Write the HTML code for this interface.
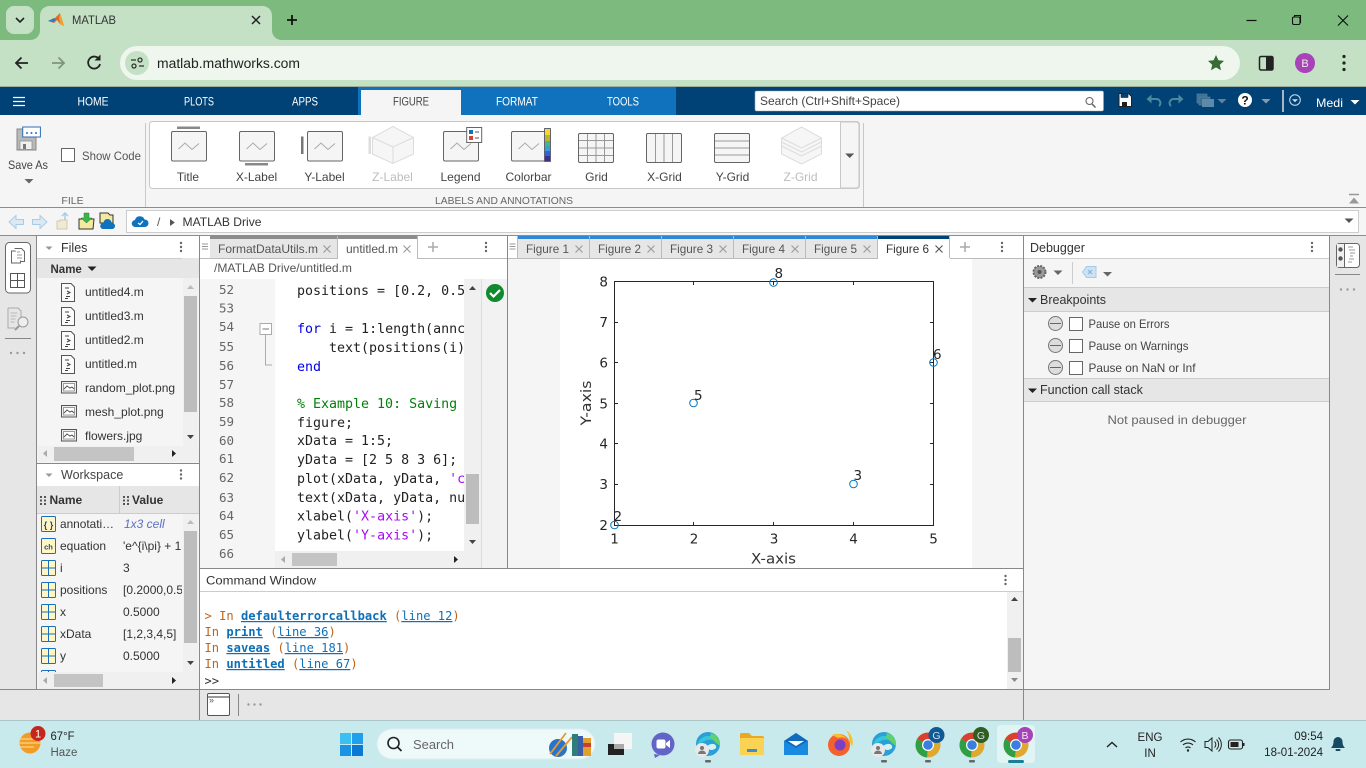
<!DOCTYPE html>
<html lang="en"><head><meta charset="utf-8"><title>MATLAB</title>
<style>
html,body{margin:0;padding:0;width:1366px;height:768px;overflow:hidden;background:#f5f5f5}
svg{display:block;position:absolute;left:0;top:0}
text{font-family:"Liberation Sans",Arial,sans-serif;font-size:12px;fill:#333;white-space:pre}
.m{text-anchor:middle}.e{text-anchor:end}
.w{fill:#fff;font-size:11.5px;text-anchor:middle}
.rl{text-anchor:middle;fill:#444}
.dis{fill:#bdbdbd}
.code{font-family:"DejaVu Sans Mono",monospace;font-size:13.3px;fill:#222}
.ln{font-family:"DejaVu Sans Mono",monospace;font-size:12.5px;fill:#666;text-anchor:end}
.kw{fill:#0000e6}.cm{fill:#028009}.st{fill:#a709f5}
.cw{font-family:"DejaVu Sans Mono",monospace;font-size:12.12px;fill:#c0651a}
.lk{fill:#0e70b8;text-decoration:underline}.b{font-weight:bold}
.pl{font-family:"DejaVu Sans",sans-serif;font-size:13.5px;fill:#262626}
.pa{font-family:"DejaVu Sans",sans-serif;font-size:14.5px;fill:#333}
.tab{fill:#555}
</style></head><body>
<svg width="1366" height="768" viewBox="0 0 1366 768" xmlns="http://www.w3.org/2000/svg">
<defs>
<g id="ax"><rect x=".5" y=".5" width="35" height="29.5" rx="1.5" fill="#f5f5f5" stroke="#666"/><path d="M7.5 18 14 12l7 6.5 7-6" fill="none" stroke="#aaa"/></g>
<g id="doc"><path d="M.5.5H10L13.5 4V18.5H.5Z" fill="#fafafa" stroke="#555"/><path d="M4 5h4M6 8l3 1.500-3 1.500M5 13.500h4M4 15.500h3" fill="none" stroke="#444"/></g>
<g id="img"><rect x=".5" y=".5" width="15" height="11.500" fill="#eee" stroke="#555"/><rect x="2.500" y="2.500" width="11" height="7.500" fill="#fff" stroke="#777" stroke-width=".7"/><path d="M3 8l3-3 3 2 2-1 2 2" fill="none" stroke="#555"/></g>
<g id="var"><rect x=".5" y=".5" width="14" height="15" rx="1" fill="#fff6c4" stroke="#1a6fbf"/><path d="M7.500 1V15M1 8H14" stroke="#1a6fbf" fill="none"/></g>
<g id="dots"><circle cx="0" cy="0" r="1.200" fill="#666"/><circle cx="0" cy="4" r="1.200" fill="#666"/><circle cx="0" cy="8" r="1.200" fill="#666"/></g>
<path id="dn" d="M-4.500-2H4.500L0 2.500Z"/>
<g id="x"><path d="M-3.500-3.500 3.500 3.500M3.500-3.500-3.500 3.500" stroke="#999" fill="none" stroke-width="1.100"/></g>
<g id="chr"><circle r="12.500" fill="#e0a92e"/><path d="M0 0-10.800-6.200A12.500 12.500 0 0 1 10.800-6.200Z" fill="#d9402f"/><path d="M0 0-10.800-6.200A12.500 12.500 0 0 0-1 12.500Z" fill="#2f9e44"/><circle r="6" fill="#fff"/><circle r="4.800" fill="#3a7fe0"/></g>
<g id="edge"><circle r="12" fill="#2a9fd8"/><path d="M-11 1A12 12 0 0 1 12 0C10-3 3-6-3-3-8-1-10 0-11 1Z" fill="#36c5d9"/><path d="M3-11A12 12 0 0 1 12 2C9 0 5-4 2-7Z" fill="#5fd36a"/><path d="M-1 2C4-2 9 0 8 4 5 7 0 7-1 2Z" fill="#d6f1f3"/><circle cx="-6" cy="6" r="7" fill="#e8e8e8"/><circle cx="-6" cy="4" r="2" fill="#777"/><path d="M-10 10a4 3.500 0 0 1 8 0Z" fill="#777"/></g>
<clipPath id="cc"><rect x="275" y="279" width="189" height="272"/></clipPath>
<clipPath id="wsv"><rect x="120" y="514" width="62" height="158"/></clipPath>
<clipPath id="fl"><rect x="38" y="278" width="144" height="168"/></clipPath>
<clipPath id="wsr"><rect x="38" y="514" width="146" height="158"/></clipPath>
</defs>

<!-- Browser chrome -->
<rect width="1366" height="40" fill="#7cbb7d"/>
<rect y="40" width="1366" height="46" fill="#c5e1c5"/>
<rect x="6" y="6" width="28" height="28" rx="8" fill="#c5e1c5"/>
<path d="M16 18l4 4 4-4" fill="none" stroke="#222" stroke-width="1.600"/>
<path d="M30 40C36 40 40 36 40 30V16C40 10 44 6 50 6H262C268 6 272 10 272 16V30C272 36 276 40 282 40Z" fill="#c5e1c5"/>
<path d="M48 21l7-3 5-5 4 13-4-2-3-4-3 3Z" fill="#e0662a"/><path d="M48 21l5 1 3-2-2-2Z" fill="#2a7fc1"/><path d="M60 13l4 13-4-2-1-6Z" fill="#f2a12e"/>
<text x="72" y="24" textLength="44" lengthAdjust="spacingAndGlyphs">MATLAB</text>
<path d="M252 16l8 8M260 16l-8 8" stroke="#222" stroke-width="1.500" fill="none"/>
<path d="M292 15v10M287 20h10" stroke="#111" stroke-width="1.800" fill="none"/>
<path d="M1246.500 20.500h10" stroke="#111" stroke-width="1.200"/>
<rect x="1292.500" y="17" width="7.500" height="7.500" rx="1.500" fill="none" stroke="#111" stroke-width="1.100"/><path d="M1294.500 17v-1.500h6v7h-1" fill="none" stroke="#111" stroke-width="1.100"/>
<path d="M1338 15.500l10 10M1348 15.500l-10 10" stroke="#111" stroke-width="1.200" fill="none"/>
<path d="M28 63H17M21.500 57.500 16 63l5.500 5.500" fill="none" stroke="#222" stroke-width="1.800"/>
<path d="M52 63H63M58.500 57.500 64 63l-5.500 5.500" fill="none" stroke="#7f947f" stroke-width="1.800"/>
<path d="M99 59a6 6 0 1 0 1 5" fill="none" stroke="#222" stroke-width="1.800"/><path d="M100.500 54.500v6h-6Z" fill="#222"/>
<rect x="120" y="46" width="1120" height="34" rx="17" fill="#eef6ee"/>
<circle cx="137" cy="63" r="12" fill="#c5e1c5"/>
<path d="M131 60h5M139 66h5" stroke="#333" stroke-width="1.300" fill="none"/><circle cx="140" cy="60" r="2" fill="none" stroke="#333" stroke-width="1.300"/><circle cx="134" cy="66" r="2" fill="none" stroke="#333" stroke-width="1.300"/>
<text x="157" y="68" style="font-size:13.500px;fill:#222" textLength="143" lengthAdjust="spacingAndGlyphs">matlab.mathworks.com</text>
<path d="M1216 55l2.400 5.300 5.600.6-4.200 3.800 1.200 5.600-5-2.900-5 2.900 1.200-5.600-4.200-3.800 5.600-.6Z" fill="#376b37"/>
<rect x="1259.500" y="56.500" width="13.500" height="13.500" rx="1.500" fill="none" stroke="#222" stroke-width="1.500"/><rect x="1266" y="56.500" width="7" height="13.500" fill="#222"/>
<circle cx="1305" cy="63" r="10" fill="#a742b8"/><text class="m" x="1305" y="67" style="fill:#eee;font-size:11px">B</text>
<circle cx="1344" cy="56.500" r="1.600" fill="#222"/><circle cx="1344" cy="63" r="1.600" fill="#222"/><circle cx="1344" cy="69.500" r="1.600" fill="#222"/>
<rect y="86" width="1366" height="1" fill="#9db09d"/>

<!-- MATLAB top bar -->
<rect y="87" width="1366" height="28" fill="#004176"/>
<path d="M13 97.500h12M13 101.500h12M13 105.500h12" stroke="#fff" stroke-width="1.300"/>
<text class="w" x="93" y="105.500" textLength="31" lengthAdjust="spacingAndGlyphs">HOME</text>
<text class="w" x="199" y="105.500" textLength="30" lengthAdjust="spacingAndGlyphs">PLOTS</text>
<text class="w" x="305" y="105.500" textLength="26" lengthAdjust="spacingAndGlyphs">APPS</text>
<rect x="461" y="87" width="215" height="28" fill="#1072bd"/>
<rect x="358" y="87" width="3" height="28" fill="#1072bd"/><rect x="358" y="87" width="103" height="3" fill="#1072bd"/>
<rect x="361" y="90" width="100" height="25" fill="#f5f5f5"/>
<text class="m" x="411" y="105.500" style="font-size:11.500px;fill:#444" textLength="36" lengthAdjust="spacingAndGlyphs">FIGURE</text>
<text class="w" x="517" y="105.500" textLength="42" lengthAdjust="spacingAndGlyphs">FORMAT</text>
<text class="w" x="623" y="105.500" textLength="32" lengthAdjust="spacingAndGlyphs">TOOLS</text>
<rect x="755" y="91" width="348.500" height="20" rx="1.500" fill="#fff" stroke="#9aa" stroke-width=".6"/>
<text x="760" y="105" style="fill:#444" textLength="140" lengthAdjust="spacingAndGlyphs">Search (Ctrl+Shift+Space)</text>
<circle cx="1089.500" cy="101" r="3.500" fill="none" stroke="#666" stroke-width="1.100"/><path d="M1092 104l3.500 3.500" stroke="#666" stroke-width="1.500"/>
<path d="M1119 93.500h9.500l3 3v10h-12.500Z" fill="#fff" stroke="#222"/><rect x="1121" y="93.500" width="7" height="4" fill="#004176" stroke="#222" stroke-width=".6"/><rect x="1122" y="102" width="5" height="4.500" fill="#222"/>
<path d="M1150 99h6a4 4 0 0 1 3 7" fill="none" stroke="#4b8a9a" stroke-width="2"/><path d="M1151.500 94.500 1146.500 99l5 4.500Z" fill="#4b8a9a"/>
<path d="M1180 99h-6a4 4 0 0 0-3 7" fill="none" stroke="#4b8a9a" stroke-width="2"/><path d="M1178.500 94.500 1183.500 99l-5 4.500Z" fill="#4b8a9a"/>
<rect x="1197" y="94" width="10" height="9" fill="#3d6f93" stroke="#5d8aa8" stroke-width=".6"/><rect x="1199" y="97" width="11" height="8" fill="#3d6f93" stroke="#5d8aa8" stroke-width=".6"/><rect x="1202" y="99" width="12" height="8" fill="#5d8aa8"/>
<path d="M-4.500-2H4.500L0 2.500Z" transform="translate(1222 101)" fill="#6a7f90"/>
<circle cx="1245" cy="100" r="7" fill="#fff"/><text class="m b" x="1245" y="104.500" style="font-size:12px;fill:#111;font-weight:bold">?</text>
<path d="M-4.500-2H4.500L0 2.500Z" transform="translate(1266 101)" fill="#8a9aa8"/>
<rect x="1282" y="90" width="2" height="22" fill="#a9b6c2"/>
<circle cx="1295" cy="100" r="5.300" fill="none" stroke="#cfe0ee" stroke-width="1"/><path d="M-3-1.300H3L0 1.700Z" transform="translate(1295 100.500)" fill="#cfe0ee"/>
<text x="1316" y="107" style="fill:#fff" textLength="27" lengthAdjust="spacingAndGlyphs">Medi</text>
<use href="#dn" transform="translate(1355 102)" fill="#fff"/>

<!-- Ribbon -->
<rect y="115" width="1366" height="92" fill="#f5f5f5"/>
<rect y="207" width="1366" height="1" fill="#8c8c8c"/>
<path d="M17 129h15l4 4v17H17Z" fill="#b9b9b9" stroke="#888"/><rect x="20" y="141" width="12" height="8.500" fill="#f0f0f0" stroke="#888" stroke-width=".7"/><rect x="23" y="144" width="3" height="5" fill="#777"/>
<rect x="22.700" y="127" width="17.700" height="10" fill="#fff" stroke="#2c6fb5"/><circle cx="27" cy="133" r="1" fill="#2c6fb5"/><circle cx="31.500" cy="133" r="1" fill="#2c6fb5"/><circle cx="36" cy="133" r="1" fill="#2c6fb5"/>
<text class="m" x="28" y="169" style="fill:#444" textLength="40" lengthAdjust="spacingAndGlyphs">Save As</text>
<use href="#dn" transform="translate(29 181)" fill="#666"/>
<rect x="61.500" y="148.500" width="13" height="13" fill="#fff" stroke="#666"/>
<text x="82" y="160" style="fill:#555" textLength="59" lengthAdjust="spacingAndGlyphs">Show Code</text>
<text class="m" x="72.500" y="204" style="font-size:10.500px;fill:#666">FILE</text>
<path d="M145.500 123V207M863.500 123V207" stroke="#c8c8c8"/>
<rect x="149.500" y="121.500" width="710" height="67" rx="3" fill="#fff" stroke="#c8c8c8"/>
<path d="M840.500 122H856a3 3 0 0 1 3 3V185a3 3 0 0 1-3 3H840.500Z" fill="#f5f5f5" stroke="#c8c8c8"/>
<use href="#dn" transform="translate(849.700 155.500)" fill="#555"/>
<use href="#ax" x="171" y="131"/><rect x="177" y="126.500" width="23" height="2.500" fill="#888"/>
<use href="#ax" x="239" y="131"/><rect x="245" y="163" width="23" height="2.500" fill="#888"/>
<use href="#ax" x="307" y="131"/><rect x="301" y="136.500" width="2.500" height="17.500" fill="#777"/>
<g stroke="#dcdcdc" fill="#f6f6f6"><path d="M393 126.500 413.500 137.500V154L393 163.500 372.500 154V137.500Z"/><path d="M372.500 137.500 393 147 413.500 137.500M393 147V163.500" fill="none"/></g><rect x="368.500" y="136.500" width="2.500" height="17.500" fill="#ddd"/>
<use href="#ax" x="443" y="131"/><rect x="466.700" y="127.500" width="15" height="15" fill="#fff" stroke="#666"/><rect x="469" y="130" width="4" height="4" fill="#1072bd"/><rect x="469" y="136" width="4" height="4" fill="#d9402f"/><path d="M475 132h4M475 138h4" stroke="#555"/>
<use href="#ax" x="511" y="131"/>
<g><rect x="544.500" y="128.500" width="6" height="33" fill="#3b2fa0" stroke="#555" stroke-width=".8"/><rect x="545" y="129" width="5" height="6" fill="#f3d92c"/><rect x="545" y="135" width="5" height="6" fill="#b9b52e"/><rect x="545" y="141" width="5" height="5" fill="#46b58a"/><rect x="545" y="146" width="5" height="5" fill="#2fa5d6"/><rect x="545" y="151" width="5" height="5" fill="#3460e0"/></g>
<g fill="#f5f5f5" stroke="#666"><rect x="578.500" y="133.500" width="35" height="29" rx="1.500"/><rect x="646.500" y="133.500" width="35" height="29" rx="1.500"/><rect x="714.500" y="133.500" width="35" height="29" rx="1.500"/></g>
<path d="M587.500 134V162M596 134V162M604.500 134V162M579 140.500H613M579 148H613M579 155.500H613M655.500 134V162M664 134V162M672.500 134V162M715 141H749M715 148H749M715 155H749" stroke="#999" fill="none"/>
<g stroke="#dcdcdc" fill="#f6f6f6"><path d="M801.500 127 821.500 138V154L801.500 164 781.500 154V138Z"/><path d="M781.500 142 801.500 152 821.500 142M781.500 146 801.500 156 821.500 146M781.500 138 801.500 148 821.500 138" fill="none"/></g>
<text class="rl" x="188" y="181">Title</text><text class="rl" x="256.500" y="181">X-Label</text><text class="rl" x="324.500" y="181">Y-Label</text><text class="rl dis" x="392.500" y="181" style="fill:#bdbdbd">Z-Label</text><text class="rl" x="460.500" y="181">Legend</text><text class="rl" x="528.500" y="181">Colorbar</text><text class="rl" x="596.500" y="181">Grid</text><text class="rl" x="664.500" y="181">X-Grid</text><text class="rl" x="732.500" y="181">Y-Grid</text><text class="rl" x="800.500" y="181" style="fill:#bdbdbd">Z-Grid</text>
<text class="m" x="504" y="204" style="font-size:10.500px;fill:#666" textLength="138" lengthAdjust="spacingAndGlyphs">LABELS AND ANNOTATIONS</text>
<path d="M1349 194.500h10" stroke="#999" stroke-width="1.500"/><path d="M1349 203.500l5-6 5 6Z" fill="#999"/>

<!-- Address bar -->
<rect y="208" width="1366" height="27" fill="#f5f5f5"/>
<g fill="#dbe9f4" stroke="#a9cbe6"><path d="M9 222l7-6.500v4h7.500v5H16v4Z"/><path d="M47 222l-7-6.500v4h-7.500v5H40v4Z"/></g>
<path d="M57 229v-8h3v-1h7v9Z" fill="#f0ead2" stroke="#cfcab0"/><path d="M65 213v7M62 216l3-3 3 3" fill="none" stroke="#a9cbe6" stroke-width="1.500"/>
<path d="M79 229v-10h15l-1 10Z" fill="#f5e8a0" stroke="#333"/><path d="M84 213h5v5h3l-5.500 5-5.500-5h3Z" fill="#3cb44a" stroke="#2a7a33" stroke-width=".5"/>
<path d="M100 213h8l2 2h3v8h-13Z" fill="#f5e8a0" stroke="#333"/><path d="M103 229a3 3 0 0 1 .5-6 4 4 0 0 1 8 0 3 3 0 0 1 1 6Z" fill="#1072bd"/>
<rect x="126.500" y="210.500" width="1232" height="22" fill="#fff" stroke="#ccc"/>
<path d="M135.500 227a3.500 3.500 0 0 1-.5-7 5 5 0 0 1 9.500-.5 3.700 3.700 0 0 1 .5 7.500Z" fill="#1072bd"/><path d="M138 223l2 1.500 3-3.500" stroke="#fff" fill="none" stroke-width="1.200"/>
<text x="157" y="226" style="fill:#555">/</text><path d="M170.500 220l3.500 2.500-3.500 2.500Z" fill="#555" stroke="#555"/>
<text x="182.500" y="226" style="fill:#333" textLength="79" lengthAdjust="spacingAndGlyphs">MATLAB Drive</text>
<use href="#dn" transform="translate(1349 220.500)" fill="#555"/>

<!-- Main background -->
<rect y="235" width="1366" height="486" fill="#e6e6e6"/>
<rect y="235" width="1366" height="1" fill="#8c8c8c"/>

<!-- Left sidebar -->
<rect x="5.500" y="242.500" width="25" height="50.500" rx="4" fill="#fff" stroke="#666"/>
<rect x="11.500" y="251" width="9" height="12" fill="#fff" stroke="#666"/><path d="M14.500 248.500h7l3 3v10h-3.500" fill="#fff" stroke="#666"/><path d="M17 252h3M17 255h5M17 258h5" stroke="#777" fill="none" stroke-width=".8"/>
<rect x="10.500" y="273.500" width="14" height="14" fill="#fff" stroke="#555"/><path d="M17.500 274V287M11 280.500H24" stroke="#555"/>
<path d="M8 308h10l3 3v7M8 308V328H15" fill="none" stroke="#aaa"/><path d="M10.500 313h7M10.500 316h6M10.500 319h5M10.500 322h4" stroke="#bbb"/><circle cx="23" cy="322" r="5" fill="#eee" stroke="#999"/><path d="M19 326l-4 4" stroke="#999" stroke-width="2"/>
<path d="M5 338.500H31" stroke="#888"/>
<circle cx="11" cy="353" r="1.200" fill="#999"/><circle cx="17.500" cy="353" r="1.200" fill="#999"/><circle cx="24" cy="353" r="1.200" fill="#999"/>
<rect x="36" y="235" width="1" height="454" fill="#888"/>

<!-- Files panel -->
<rect x="37" y="236" width="162" height="22" fill="#fff"/>
<path d="M-3.500-1.500H3.500L0 2Z" transform="translate(49 248)" fill="#999"/>
<text x="61" y="252" style="font-size:12.500px;fill:#333">Files</text>
<use href="#dots" transform="translate(181 243)"/>
<rect x="37" y="258" width="145" height="1" fill="#ccc"/>
<rect x="37" y="259" width="145" height="19" fill="#e6e6e6"/>
<rect x="37" y="278" width="162" height="185" fill="#f5f5f5"/>
<text x="50.500" y="273" style="font-weight:bold;fill:#333;font-size:11.500px">Name</text>
<use href="#dn" transform="translate(92 268.500)" fill="#222"/>
<use href="#doc" x="61" y="283"/><use href="#doc" x="61" y="307"/><use href="#doc" x="61" y="331"/><use href="#doc" x="61" y="355"/>
<use href="#img" x="61" y="381"/><use href="#img" x="61" y="405"/><use href="#img" x="61" y="429"/>
<g clip-path="url(#fl)">
<text x="85" y="296">untitled4.m</text><text x="85" y="320">untitled3.m</text><text x="85" y="344">untitled2.m</text><text x="85" y="368">untitled.m</text><text x="85" y="392">random_plot.png</text><text x="85" y="416">mesh_plot.png</text><text x="85" y="440">flowers.jpg</text>
</g>
<rect x="183" y="278" width="15" height="168" fill="#f0f0f0"/>
<path d="M190.500 285l-3.500 4h7Z" fill="#bbb"/><rect x="184" y="296" width="13" height="116" fill="#bdbdbd"/><path d="M187 435h7l-3.500 4Z" fill="#444"/>
<rect x="38" y="446" width="161" height="16" fill="#f0f0f0"/><rect x="54" y="447" width="80" height="14" fill="#c4c4c4"/>
<path d="M47 450v7l-4-3.500Z" fill="#aaa"/><path d="M172 450v7l4-3.500Z" fill="#222"/>
<rect x="37" y="463" width="162" height="1" fill="#888"/>
<rect x="199" y="236" width="1" height="485" fill="#888"/>

<!-- Workspace -->
<rect x="37" y="464" width="162" height="22" fill="#fff"/>
<path d="M-3.500-1.500H3.500L0 2Z" transform="translate(49 475)" fill="#999"/>
<text x="61" y="479" style="font-size:12.500px;fill:#444">Workspace</text>
<use href="#dots" transform="translate(181 470.500)"/>
<rect x="37" y="486" width="145" height="27" fill="#e6e6e6"/><rect x="119" y="486" width="1" height="27" fill="#ccc"/>
<rect x="37" y="513" width="162" height="176" fill="#f5f5f5"/><rect x="37" y="513" width="162" height="1" fill="#ccc"/>
<g fill="#555"><rect x="40" y="496" width="2" height="2"/><rect x="44" y="496" width="2" height="2"/><rect x="40" y="499.500" width="2" height="2"/><rect x="44" y="499.500" width="2" height="2"/><rect x="40" y="503" width="2" height="2"/><rect x="44" y="503" width="2" height="2"/><rect x="123" y="496" width="2" height="2"/><rect x="127" y="496" width="2" height="2"/><rect x="123" y="499.500" width="2" height="2"/><rect x="127" y="499.500" width="2" height="2"/><rect x="123" y="503" width="2" height="2"/><rect x="127" y="503" width="2" height="2"/></g>
<text x="49.500" y="504" style="font-weight:bold">Name</text><text x="132" y="504" style="font-weight:bold">Value</text>
<g clip-path="url(#wsr)">
<rect x="41.500" y="516.500" width="14" height="15" rx="1" fill="#fff6c4" stroke="#1a6fbf"/><text class="m" x="48.500" y="528" style="font-size:9px;font-weight:bold;fill:#1a4f8a">{ }</text>
<rect x="41.500" y="538.500" width="14" height="15" rx="1" fill="#fff6c4" stroke="#1a6fbf"/><text class="m" x="48.500" y="549.500" style="font-size:7.500px;font-weight:bold;fill:#1a4f8a">ch</text>
<use href="#var" x="41" y="560"/><use href="#var" x="41" y="582"/><use href="#var" x="41" y="604"/><use href="#var" x="41" y="626"/><use href="#var" x="41" y="648"/><use href="#var" x="41" y="670"/>
</g>
<text x="60" y="528" textLength="54" lengthAdjust="spacingAndGlyphs">annotati…</text><text x="60" y="550">equation</text><text x="60" y="572">i</text><text x="60" y="594">positions</text><text x="60" y="616">x</text><text x="60" y="638">xData</text><text x="60" y="660">y</text>
<g clip-path="url(#wsv)">
<text x="124" y="528" style="font-style:italic;fill:#5a6fc8">1x3 cell</text><text x="123" y="550">'e^{i\pi} + 1</text><text x="123" y="572">3</text><text x="123" y="594">[0.2000,0.5</text><text x="123" y="616">0.5000</text><text x="123" y="638">[1,2,3,4,5]</text><text x="123" y="660">0.5000</text>
</g>
<rect x="183" y="514" width="15" height="158" fill="#f0f0f0"/>
<path d="M190.500 520l-3.500 4h7Z" fill="#bbb"/><rect x="184" y="531" width="13" height="112" fill="#bdbdbd"/><path d="M187 661h7l-3.500 4Z" fill="#444"/>
<rect x="38" y="672" width="161" height="17" fill="#f0f0f0"/><rect x="54" y="674" width="49" height="13" fill="#c4c4c4"/>
<path d="M47 677v7l-4-3.500Z" fill="#aaa"/><path d="M172 677v7l4-3.500Z" fill="#222"/>
<rect y="689" width="1330" height="1" fill="#888"/>

<!-- Editor -->
<rect x="200" y="236" width="307" height="23" fill="#fff"/>
<path d="M202 244h6M202 246.500h6M202 249h6" stroke="#999"/>
<rect x="210" y="236" width="127" height="22" fill="#e6e6e6"/><rect x="210" y="236" width="127" height="3" fill="#8c8c8c"/>
<rect x="337" y="236" width="1" height="22" fill="#bbb"/>
<rect x="338" y="236" width="79" height="3" fill="#8c8c8c"/><rect x="417" y="236" width="1" height="23" fill="#bbb"/>
<rect x="200" y="258" width="138" height="1" fill="#bbb"/><rect x="418" y="258" width="89" height="1" fill="#bbb"/>
<text x="218" y="253" class="tab" textLength="100" lengthAdjust="spacingAndGlyphs">FormatDataUtils.m</text><use href="#x" transform="translate(327 249)"/>
<text x="346" y="253" class="tab" textLength="52" lengthAdjust="spacingAndGlyphs">untitled.m</text><use href="#x" transform="translate(407 249)"/>
<path d="M433 242v10M428 247h10" stroke="#aaa" stroke-width="1.500"/>
<use href="#dots" transform="translate(486 243)"/>
<rect x="200" y="259" width="307" height="20" fill="#fff"/>
<text x="214" y="272" style="fill:#555" textLength="138" lengthAdjust="spacingAndGlyphs">/MATLAB Drive/untitled.m</text>
<rect x="200" y="279" width="75" height="289" fill="#f5f5f5"/>
<rect x="275" y="279" width="189" height="272" fill="#fff"/>
<rect x="275" y="551" width="206" height="17" fill="#f0f0f0"/>
<rect x="464" y="279" width="17" height="272" fill="#f0f0f0"/>
<rect x="481" y="279" width="26" height="289" fill="#f2f2f2"/>
<rect x="481" y="279" width="1" height="289" fill="#ddd"/>
<text class="ln" x="234" y="294">52</text><text class="ln" x="234" y="312.500">53</text><text class="ln" x="234" y="331">54</text><text class="ln" x="234" y="351">55</text><text class="ln" x="234" y="370">56</text><text class="ln" x="234" y="389">57</text><text class="ln" x="234" y="407">58</text><text class="ln" x="234" y="426">59</text><text class="ln" x="234" y="445">60</text><text class="ln" x="234" y="463">61</text><text class="ln" x="234" y="482">62</text><text class="ln" x="234" y="502">63</text><text class="ln" x="234" y="520">64</text><text class="ln" x="234" y="539">65</text><text class="ln" x="234" y="558">66</text>
<rect x="260" y="323.500" width="11.500" height="11" fill="#fff" stroke="#aaa"/><path d="M262.500 329h6.500" stroke="#777"/><path d="M265.500 335V365H272" fill="none" stroke="#aaa"/>
<g clip-path="url(#cc)">
<text class="code" x="297" y="295">positions = [0.2, 0.5, 0.8];</text>
<text class="code" x="297" y="333"><tspan class="kw">for</tspan> i = 1:length(annc</text>
<text class="code" x="329" y="352">text(positions(i), y);</text>
<text class="code kw" x="297" y="371" style="fill:#0000e6">end</text>
<text class="code cm" x="297" y="408" style="fill:#028009">% Example 10: Saving a figure</text>
<text class="code" x="297" y="427">figure;</text>
<text class="code" x="297" y="445">xData = 1:5;</text>
<text class="code" x="297" y="464">yData = [2 5 8 3 6];</text>
<text class="code" x="297" y="483">plot(xData, yData, <tspan class="st">'c');</tspan></text>
<text class="code" x="297" y="502">text(xData, yData, num2str(y));</text>
<text class="code" x="297" y="520.500">xlabel(<tspan class="st">'X-axis'</tspan>);</text>
<text class="code" x="297" y="539.500">ylabel(<tspan class="st">'Y-axis'</tspan>);</text>
</g>
<path d="M472.500 286l-3.500 4h7Z" fill="#444"/><rect x="466" y="474" width="13" height="50" fill="#bdbdbd"/><path d="M469 540h7l-3.500 4Z" fill="#444"/>
<rect x="292" y="553" width="45" height="13" fill="#c4c4c4"/><path d="M285 556v7l-4-3.500Z" fill="#aaa"/><path d="M454 556v7l4-3.500Z" fill="#222"/>
<circle cx="495" cy="293" r="9" fill="#0f8a2c"/><path d="M490 293l3.500 3.500 6.500-6.500" fill="none" stroke="#fff" stroke-width="2.200"/>
<rect x="507" y="236" width="1" height="333" fill="#888"/><rect x="508" y="402" width="1" height="2" fill="#222"/>

<!-- Figures -->
<rect x="508" y="236" width="515" height="23" fill="#fff"/>
<path d="M509.500 244h6M509.500 246.500h6M509.500 249h6" stroke="#999"/>
<g fill="#e6e6e6"><rect x="518" y="236" width="71" height="22"/><rect x="590" y="236" width="71" height="22"/><rect x="662" y="236" width="71" height="22"/><rect x="734" y="236" width="71" height="22"/><rect x="806" y="236" width="71" height="22"/></g>
<g fill="#2f87d6"><rect x="518" y="236" width="71" height="3"/><rect x="590" y="236" width="71" height="3"/><rect x="662" y="236" width="71" height="3"/><rect x="734" y="236" width="71" height="3"/><rect x="806" y="236" width="71" height="3"/></g>
<rect x="878" y="236" width="72" height="3" fill="#004176"/>
<path d="M517.500 236V258M589.500 236V258M661.500 236V258M733.500 236V258M805.500 236V258M877.500 236V258M949.500 236V258" stroke="#bbb"/>
<rect x="508" y="258" width="370" height="1" fill="#bbb"/><rect x="950" y="258" width="73" height="1" fill="#bbb"/>
<text x="526" y="253" class="tab" textLength="43" lengthAdjust="spacingAndGlyphs">Figure 1</text><use href="#x" transform="translate(579 249)"/>
<text x="598" y="253" class="tab" textLength="43" lengthAdjust="spacingAndGlyphs">Figure 2</text><use href="#x" transform="translate(651 249)"/>
<text x="670" y="253" class="tab" textLength="43" lengthAdjust="spacingAndGlyphs">Figure 3</text><use href="#x" transform="translate(723 249)"/>
<text x="742" y="253" class="tab" textLength="43" lengthAdjust="spacingAndGlyphs">Figure 4</text><use href="#x" transform="translate(795 249)"/>
<text x="814" y="253" class="tab" textLength="43" lengthAdjust="spacingAndGlyphs">Figure 5</text><use href="#x" transform="translate(867 249)"/>
<text x="886" y="253" style="fill:#333" textLength="43" lengthAdjust="spacingAndGlyphs">Figure 6</text><g transform="translate(939 249)"><path d="M-3.500-3.500 3.500 3.500M3.500-3.500-3.500 3.500" stroke="#555" fill="none" stroke-width="1.100"/></g>
<path d="M965 242v10M960 247h10" stroke="#aaa" stroke-width="1.500"/>
<use href="#dots" transform="translate(1002 243)"/>
<rect x="508" y="259" width="515" height="309" fill="#f5f5f5"/>
<rect x="560" y="259" width="412" height="309" fill="#fff"/>
<rect x="614.500" y="281.500" width="319" height="244" fill="none" stroke="#262626"/>
<path d="M693.500 525V522M773.500 525V522M853.500 525V522M693.500 282V285M773.500 282V285M853.500 282V285M615 322.500h3M615 362.500h3M615 403.500h3M615 443.500h3M615 484.500h3M933 322.500h-3M933 362.500h-3M933 403.500h-3M933 443.500h-3M933 484.500h-3" stroke="#262626" fill="none"/>
<g><text class="pl e" x="608" y="286.500">8</text><text class="pl e" x="608" y="327">7</text><text class="pl e" x="608" y="367.500">6</text><text class="pl e" x="608" y="408.500">5</text><text class="pl e" x="608" y="448.500">4</text><text class="pl e" x="608" y="489">3</text><text class="pl e" x="608" y="530">2</text>
<text class="pl m" x="614.500" y="543.500">1</text><text class="pl m" x="694" y="543.500">2</text><text class="pl m" x="774" y="543.500">3</text><text class="pl m" x="853.500" y="543.500">4</text><text class="pl m" x="933.500" y="543.500">5</text></g>
<text class="pa m" x="773.500" y="563.500" textLength="45" lengthAdjust="spacingAndGlyphs">X-axis</text>
<text class="pa m" transform="translate(591 403) rotate(-90)" x="0" y="0" textLength="45" lengthAdjust="spacingAndGlyphs">Y-axis</text>
<g fill="none" stroke="#0072bd"><circle cx="614.500" cy="525" r="3.800"/><circle cx="693.500" cy="403" r="3.800"/><circle cx="773.500" cy="282.500" r="3.800"/><circle cx="853.500" cy="484" r="3.800"/><circle cx="933.500" cy="362.500" r="3.800"/></g>
<text class="pl" x="613.500" y="521">2</text><text class="pl" x="694" y="400">5</text><text class="pl" x="774.500" y="278">8</text><text class="pl" x="853.500" y="480">3</text><text class="pl" x="933" y="359">6</text>
<rect x="1023" y="236" width="1" height="485" fill="#888"/>

<!-- Command Window -->
<rect x="200" y="568" width="823" height="1" fill="#888"/>
<rect x="200" y="569" width="823" height="22" fill="#fff"/>
<text x="206" y="584.500" style="fill:#333" textLength="110" lengthAdjust="spacingAndGlyphs">Command Window</text>
<use href="#dots" transform="translate(1005.500 576)"/>
<rect x="200" y="591" width="823" height="1" fill="#ccc"/>
<rect x="200" y="592" width="823" height="97" fill="#fff"/>
<text class="cw" x="204.500" y="620">&gt; In <tspan class="lk b">defaulterrorcallback</tspan> (<tspan class="lk">line 12</tspan>)</text>
<text class="cw" x="204.500" y="636">In <tspan class="lk b">print</tspan> (<tspan class="lk">line 36</tspan>)</text>
<text class="cw" x="204.500" y="652">In <tspan class="lk b">saveas</tspan> (<tspan class="lk">line 181</tspan>)</text>
<text class="cw" x="204.500" y="668">In <tspan class="lk b">untitled</tspan> (<tspan class="lk">line 67</tspan>)</text>
<text class="cw" x="204.500" y="685" style="fill:#333">&gt;&gt;</text>
<rect x="1007" y="592" width="16" height="97" fill="#f0f0f0"/>
<path d="M1014.500 597l-3.500 4h7Z" fill="#444"/><rect x="1008" y="638" width="13" height="34" fill="#bdbdbd"/><path d="M1011 678h7l-3.500 4Z" fill="#888"/>

<!-- Debugger -->
<rect x="1024" y="236" width="305" height="22" fill="#fff"/>
<text x="1030" y="252" style="font-size:12.500px;fill:#333">Debugger</text>
<use href="#dots" transform="translate(1312 243)"/>
<rect x="1024" y="258" width="305" height="1" fill="#ccc"/>
<rect x="1024" y="259" width="305" height="430" fill="#f5f5f5"/>
<circle cx="1039.500" cy="272" r="6" fill="#999" stroke="#666" stroke-width="2" stroke-dasharray="2 1.200"/><circle cx="1039.500" cy="272" r="2" fill="#555"/>
<use href="#dn" transform="translate(1058 272.500)" fill="#666"/>
<path d="M1072.500 262V284" stroke="#ccc"/>
<path d="M1082.500 272l4-5.500H1096V277.500H1086.500Z" fill="#cfe2f3" stroke="#a9cbe6"/><path d="M1088 270l4 4M1092 270l-4 4" stroke="#7fb0d8"/>
<use href="#dn" transform="translate(1107.500 274)" fill="#666"/>
<rect x="1024" y="288" width="305" height="23" fill="#e6e6e6"/><path d="M1024 287.500H1329M1024 311.500H1329" stroke="#ccc"/>
<use href="#dn" transform="translate(1032.500 300)" fill="#222"/>
<text x="1040" y="304" style="font-size:12.500px;fill:#333">Breakpoints</text>
<g fill="#ddd" stroke="#777"><circle cx="1055.500" cy="323.500" r="7"/><circle cx="1055.500" cy="345.500" r="7"/><circle cx="1055.500" cy="367.500" r="7"/></g>
<path d="M1050 323.500h11M1050 345.500h11M1050 367.500h11" stroke="#666"/>
<g fill="#fff" stroke="#666"><rect x="1069.500" y="317.500" width="13" height="13"/><rect x="1069.500" y="339.500" width="13" height="13"/><rect x="1069.500" y="361.500" width="13" height="13"/></g>
<text x="1088.500" y="328" style="fill:#444" textLength="81" lengthAdjust="spacingAndGlyphs">Pause on Errors</text><text x="1088.500" y="350" style="fill:#444" textLength="100" lengthAdjust="spacingAndGlyphs">Pause on Warnings</text><text x="1088.500" y="372" style="fill:#444" textLength="107" lengthAdjust="spacingAndGlyphs">Pause on NaN or Inf</text>
<rect x="1024" y="379" width="305" height="22" fill="#e6e6e6"/><path d="M1024 378.500H1329M1024 401.500H1329" stroke="#ccc"/>
<use href="#dn" transform="translate(1032.500 390.500)" fill="#222"/>
<text x="1040" y="394" style="font-size:12.500px;fill:#333">Function call stack</text>
<text class="m" x="1177" y="424" style="fill:#666" textLength="139" lengthAdjust="spacingAndGlyphs">Not paused in debugger</text>
<rect x="1329" y="236" width="1" height="453" fill="#888"/>

<!-- Right sidebar -->
<rect x="1336.500" y="243.500" width="23" height="24" rx="3" fill="#fff" stroke="#666"/><path d="M1344.500 244V267" stroke="#666"/>
<rect x="1337" y="244" width="7" height="23" fill="#f0f0f0"/><circle cx="1340.500" cy="249.500" r="2.200" fill="#555"/><circle cx="1340.500" cy="258.500" r="2.200" fill="#555"/>
<path d="M1348 247h5M1349 250h6M1350 253h5M1350 256h3M1349 259h5M1348 262h4" stroke="#777" fill="none" stroke-width=".8"/>
<path d="M1335 274.500H1360" stroke="#888"/>
<circle cx="1341" cy="289.500" r="1.200" fill="#999"/><circle cx="1347.500" cy="289.500" r="1.200" fill="#999"/><circle cx="1354" cy="289.500" r="1.200" fill="#999"/>

<!-- Bottom bar -->
<rect x="207.500" y="693.500" width="22" height="22" rx="1.500" fill="#fff" stroke="#555"/><path d="M208 697h21" stroke="#999" stroke-width="2"/>
<text x="209" y="703" style="font-size:9px;fill:#555">»</text>
<path d="M238.500 694V716" stroke="#888"/>
<circle cx="248.500" cy="704.500" r="1.200" fill="#999"/><circle cx="254.500" cy="704.500" r="1.200" fill="#999"/><circle cx="260.500" cy="704.500" r="1.200" fill="#999"/>

<!-- Taskbar -->
<rect y="720" width="1366" height="48" fill="#c9eaec"/>
<rect y="720" width="1366" height="1" fill="#a9c4c6"/>
<circle cx="30" cy="743" r="10.500" fill="#f39c25"/><path d="M19 739h18M19 743h22M20 747h14" stroke="#f8d48a" stroke-width="1.300"/>
<circle cx="38" cy="733.500" r="7.500" fill="#c4281c"/><text class="m" x="38" y="737.500" style="fill:#fff;font-size:11px">1</text>
<text x="50.500" y="740" style="fill:#222;font-size:11.500px" textLength="24" lengthAdjust="spacingAndGlyphs">67°F</text>
<text x="50.500" y="756" style="fill:#555;font-size:11.500px">Haze</text>
<g><rect x="340" y="733" width="11" height="11" fill="#3cc0f2"/><rect x="352" y="733" width="11" height="11" fill="#20a0ea"/><rect x="340" y="745" width="11" height="11" fill="#1b93e4"/><rect x="352" y="745" width="11" height="11" fill="#0b78d4"/></g>
<rect x="377" y="729" width="218" height="30" rx="15" fill="#eef9f9" stroke="#dbeeee"/>
<circle cx="393.500" cy="743" r="5.500" fill="none" stroke="#222" stroke-width="1.600"/><path d="M397.500 747l4 4" stroke="#222" stroke-width="1.800"/>
<text x="413" y="749" style="fill:#666;font-size:12.500px" textLength="41" lengthAdjust="spacingAndGlyphs">Search</text>
<circle cx="558" cy="748" r="9" fill="#2a74c8"/><path d="M550 754 566 733M556 756 572 737" stroke="#e89a30" stroke-width="1.800"/>
<rect x="572" y="734" width="6" height="22" fill="#2e7d7a"/><rect x="578" y="736" width="5" height="20" fill="#3a5fa8"/><rect x="583" y="738" width="8" height="18" fill="#e0a02e"/><rect x="583" y="743" width="8" height="4" fill="#c8402c"/>
<rect x="608" y="744" width="16" height="11" fill="#222"/><rect x="614" y="733" width="18" height="16" fill="#f5f5f5"/><rect x="614" y="744" width="10" height="5" fill="#aaa"/>
<circle cx="663" cy="744" r="11.500" fill="#6264c8"/><path d="M654 754l1 4 5-3Z" fill="#6264c8"/><rect x="656.500" y="739.500" width="9" height="9" rx="2" fill="#fff"/><path d="M666 743l4-3v8l-4-3Z" fill="#fff"/>
<use href="#edge" transform="translate(708 744)"/><rect x="705" y="760" width="6" height="2.500" rx="1" fill="#666"/>
<path d="M740 735a2 2 0 0 1 2-2h7l3 3h10a2 2 0 0 1 2 2v2h-24Z" fill="#e8a820"/><rect x="740" y="738" width="24" height="17" rx="1.500" fill="#fad355"/><rect x="747" y="749" width="10" height="3" fill="#3a8fd0"/>
<path d="M784 741l12-8 12 8v14h-24Z" fill="#1a8ae0"/><path d="M784 741l12-8 12 8-12 7Z" fill="#0f6cbd"/><path d="M788 741h16l-8 5Z" fill="#fff"/>
<circle cx="839" cy="745" r="11" fill="#f5612c"/><path d="M832 735c6-3 14 0 17 7 1-5-1-9-3-12 6 4 8 11 6 17-2-8-8-11-14-9Z" fill="#fbbf2e"/><circle cx="840" cy="745" r="5.500" fill="#7b3fc4"/>
<use href="#edge" transform="translate(884 744)"/><rect x="881" y="760" width="6" height="2.500" rx="1" fill="#666"/>
<use href="#chr" transform="translate(928 745)"/><circle cx="936.500" cy="735" r="8" fill="#0d5a96"/><text class="m" x="936.500" y="739" style="fill:#dde;font-size:10.500px">G</text><rect x="925" y="760" width="6" height="2.500" rx="1" fill="#666"/>
<use href="#chr" transform="translate(972 745)"/><circle cx="981" cy="735" r="8" fill="#2f5e1e"/><text class="m" x="981" y="739" style="fill:#dde;font-size:10.500px">G</text><rect x="969" y="760" width="6" height="2.500" rx="1" fill="#666"/>
<rect x="997" y="725" width="38" height="38" rx="4" fill="#e0f4f4"/>
<use href="#chr" transform="translate(1016 745)"/><circle cx="1025" cy="735" r="8" fill="#a742b8"/><text class="m" x="1025" y="739" style="fill:#eee;font-size:10.500px">B</text><rect x="1008" y="760" width="16" height="3" rx="1.500" fill="#1a7f96"/>
<path d="M1107 747l5-4.500 5 4.500" fill="none" stroke="#222" stroke-width="1.400"/>
<text class="m" x="1150" y="741" style="fill:#222;font-size:11.500px">ENG</text><text class="m" x="1150" y="757" style="fill:#222;font-size:11.500px">IN</text>
<path d="M1180.500 742a11 11 0 0 1 15 0M1183 745a7.500 7.500 0 0 1 10 0M1185.500 748a3.500 3.500 0 0 1 5 0" fill="none" stroke="#222" stroke-width="1.100"/><circle cx="1188" cy="750.500" r="1.200" fill="#222"/>
<path d="M1205 741.500h3l4-3.500v13l-4-3.500h-3Z" fill="none" stroke="#222"/><path d="M1214.500 741.500a4 4 0 0 1 0 6M1216.500 739.500a7 7 0 0 1 0 10M1218.500 737.500a10 10 0 0 1 0 14" fill="none" stroke="#222"/>
<rect x="1228.500" y="740" width="14" height="9" rx="2" fill="none" stroke="#222" stroke-width="1.100"/><rect x="1230.500" y="742" width="8" height="5" fill="#222"/><rect x="1243" y="743" width="1.500" height="3" fill="#222"/>
<text class="e" x="1323" y="740" style="fill:#222;font-size:11.500px">09:54</text><text class="e" x="1323" y="756" style="fill:#222;font-size:11.500px">18-01-2024</text>
<path d="M1338 737a4.500 4.500 0 0 1 4.500 4.500c0 3 1 5 2.500 6.500h-14c1.500-1.500 2.500-3.500 2.500-6.500a4.500 4.500 0 0 1 4.500-4.500Z" fill="#164a63"/><rect x="1335.500" y="749" width="5" height="2" rx="1" fill="#164a63"/>
</svg>
</body></html>
